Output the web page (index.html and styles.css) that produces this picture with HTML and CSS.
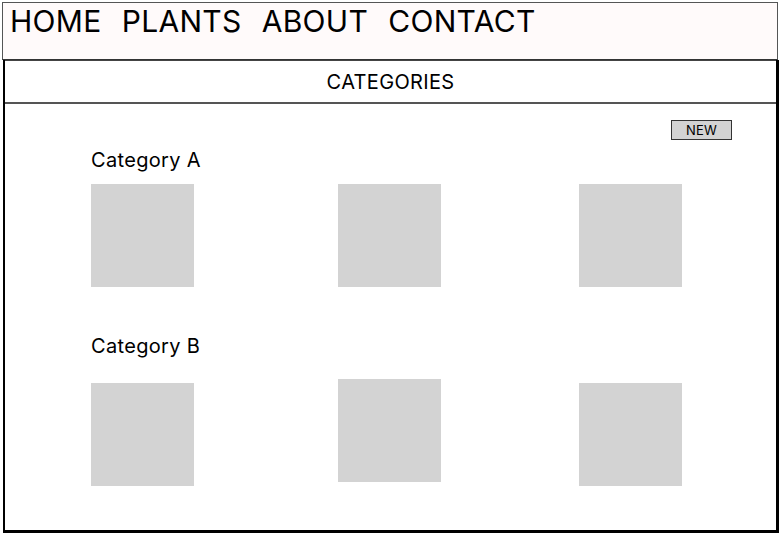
FILE: index.html
```html
<!DOCTYPE html>
<html lang="en">
<head>
<meta charset="utf-8">
<title>Plants – Categories</title>
<link rel="stylesheet" href="styles.css">
</head>
<body>
<header class="topbar">
  <nav class="nav">
    <a class="nav-link" href="#">HOME</a>
    <a class="nav-link" href="#">PLANTS</a>
    <a class="nav-link" href="#">ABOUT</a>
    <a class="nav-link" href="#">CONTACT</a>
  </nav>
</header>
<main class="panel">
  <div class="panel-title">CATEGORIES</div>
  <div class="panel-body">
    <div class="toolbar">
      <button class="btn-new" type="button">NEW</button>
    </div>
    <section class="category">
      <h2 class="category-name">Category A</h2>
      <div class="tiles">
        <div class="tile"></div>
        <div class="tile"></div>
        <div class="tile"></div>
      </div>
    </section>
    <section class="category category-b">
      <h2 class="category-name">Category B</h2>
      <div class="tiles tiles-b">
        <div class="tile tile-low"></div>
        <div class="tile"></div>
        <div class="tile tile-low"></div>
      </div>
    </section>
  </div>
</main>
</body>
</html>
```

FILE: styles.css
```css
* { box-sizing: border-box; }
html, body { margin: 0; padding: 0; background: #fff; }
body {
  font-family: Inter, "Liberation Sans", sans-serif;
  color: #000;
  letter-spacing: 0.02em;
  width: 780px;
  height: 535px;
  overflow: hidden;
}
.topbar {
  margin: 2px 2px 0 2px;
  height: 58px;
  border: 1px solid #555;
  border-bottom-color: #333;
  background: #fffafa;
}
.nav {
  display: flex;
  gap: 20px;
  padding-left: 7px;
}
.nav-link {
  font-size: 30px;
  line-height: 36px;
  color: #000;
  text-decoration: none;
}
.panel {
  margin-left: 3px;
  width: 776px;
  height: 473px;
  border-left: 2px solid #000;
  border-right: 3px solid #000;
  border-bottom: 3px solid #000;
  display: flex;
  flex-direction: column;
}
.panel-title {
  height: 44px;
  line-height: 42px;
  text-align: center;
  font-size: 20px;
  border-top: 1px solid #444;
  border-bottom: 2px solid #555;
}
.panel-body {
  padding: 16px 44px 0 86px;
}
.toolbar {
  display: flex;
  justify-content: flex-end;
}
.btn-new {
  width: 61px;
  height: 20px;
  padding: 0;
  background: #d3d3d3;
  border: 1px solid #333;
  font-family: Inter, "Liberation Sans", sans-serif;
  font-size: 13px;
  line-height: 19px;
  letter-spacing: 0.02em;
  color: #000;
}
.category-name {
  margin: 8px 0 0 0;
  font-size: 20px;
  line-height: 25px;
  font-weight: 400;
}
.category-b .category-name { margin-top: 47px; }
.tiles {
  display: grid;
  grid-template-columns: 247px 241px 103px;
  align-items: start;
  margin-top: 11px;
}
.tiles-b { margin-top: 20px; }
.tile {
  width: 103px;
  height: 103px;
  background: #d3d3d3;
}
.tile-low { margin-top: 4px; }
```
